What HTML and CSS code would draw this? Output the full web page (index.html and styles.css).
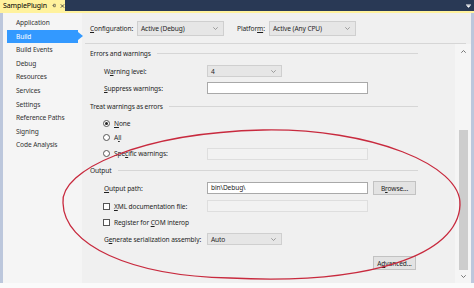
FILE: index.html
```html
<!DOCTYPE html>
<html lang="en">
<head>
<meta charset="UTF-8" />
<title>SamplePlugin - Build</title>
<link rel="stylesheet" href="styles.css">
</head>
<body>
<div class="window">
  <div class="tabbar">
    <div class="tab">
      <span class="tab-title">SamplePlugin</span>
      <svg class="tab-pin" width="5" height="5" viewBox="0 0 5 5"><path d="M0.5 2.5h1.5M2 1v3h2V1z" fill="none" stroke="#444" stroke-width="0.8"/></svg>
      <svg class="tab-close" width="6" height="6" viewBox="0 0 6 6"><path d="M1 1l4 4M5 1l-4 4" stroke="#333" stroke-width="1"/></svg>
    </div>
    <svg class="tab-menu" width="5" height="4" viewBox="0 0 5 4"><path d="M0 0.5h5M0.5 1.5h4L2.5 3.5z" fill="#fff" stroke="#fff" stroke-width="0.5"/></svg>
  </div>

  <div class="workspace">
    <ul class="nav">
      <li>Application</li>
      <li class="active">Build</li>
      <li>Build Events</li>
      <li>Debug</li>
      <li>Resources</li>
      <li>Services</li>
      <li>Settings</li>
      <li>Reference Paths</li>
      <li>Signing</li>
      <li>Code Analysis</li>
    </ul>

    <div class="main">
      <div class="config-bar">
        <span class="config-label"><u>C</u>onfiguration:</span>
        <div class="select config-select"><span>Active (Debug)</span><svg class="chev" width="5" height="3" viewBox="0 0 5 3"><path d="M0.3 0.3l2.2 2.2 2.2-2.2" fill="none" stroke="#888" stroke-width="0.8"/></svg></div>
        <span class="platform-label">Platfor<u>m</u>:</span>
        <div class="select config-select"><span>Active (Any CPU)</span><svg class="chev" width="5" height="3" viewBox="0 0 5 3"><path d="M0.3 0.3l2.2 2.2 2.2-2.2" fill="none" stroke="#888" stroke-width="0.8"/></svg></div>
      </div>
      <div class="config-rule"></div>

      <div class="scroll-area">
        <div class="form">
          <div class="section r1"><span>Errors and warnings</span></div>

          <span class="label r2"><span>W<u>a</u>rning level:</span></span>
          <div class="select field-select r2"><span>4</span><svg class="chev" width="5" height="3" viewBox="0 0 5 3"><path d="M0.3 0.3l2.2 2.2 2.2-2.2" fill="none" stroke="#888" stroke-width="0.8"/></svg></div>

          <span class="label r3"><span><u>S</u>uppress warnings:</span></span>
          <div class="input r3"></div>

          <div class="section r4"><span>Treat warnings as errors</span></div>

          <label class="option r5"><span class="radio checked"></span><span><u>N</u>one</span></label>
          <label class="option r6"><span class="radio"></span><span>A<u>l</u>l</span></label>
          <label class="option r7"><span class="radio"></span><span>Spe<u>c</u>ific warnings:</span></label>
          <div class="input disabled r7"></div>

          <div class="section r8"><span>Output</span></div>

          <span class="label r9"><span><u>O</u>utput path:</span></span>
          <div class="input r9">bin\Debug\</div>
          <button class="btn r9">B<u>r</u>owse...</button>

          <label class="option r10"><span class="check"></span><span><u>X</u>ML documentation file:</span></label>
          <div class="input disabled r10"></div>

          <label class="option r11"><span class="check"></span><span>Register for <u>C</u>OM interop</span></label>

          <span class="label r12"><span>G<u>e</u>nerate serialization assembly:</span></span>
          <div class="select field-select r12"><span>Auto</span><svg class="chev" width="5" height="3" viewBox="0 0 5 3"><path d="M0.3 0.3l2.2 2.2 2.2-2.2" fill="none" stroke="#888" stroke-width="0.8"/></svg></div>

          <button class="btn r13">A<u>d</u>vanced...</button>
        </div>

        <div class="scrollbar">
          <svg class="arrow" width="5" height="3" viewBox="0 0 5 3"><path d="M0.3 2.7l2.2-2.2 2.2 2.2" fill="none" stroke="#666" stroke-width="0.9"/></svg>
          <div class="track"><div class="thumb"></div></div>
          <svg class="arrow" width="5" height="3" viewBox="0 0 5 3"><path d="M0.3 0.3l2.2 2.2 2.2-2.2" fill="none" stroke="#666" stroke-width="0.9"/></svg>
        </div>
      </div>
    </div>
  </div>
</div>

<svg class="annotation" width="474" height="288" viewBox="0 0 474 288">
  <path d="M63 203 C60 170 140 133 263 130 C370 128 462 165 460 205 C458 255 370 285 230 278 C130 276 64 245 63 203 Z" fill="none" stroke="#c82a3e" stroke-width="1.3"/>
</svg>
</body>
</html>
```

FILE: styles.css
```css
/* Base */
* {
  margin: 0;
  padding: 0;
  box-sizing: border-box;
}

body {
  width: 474px;
  height: 288px;
  overflow: hidden;
  background: #fafafa;
  font-family: 'Noto Sans', 'Open Sans', sans-serif;
  font-size: 6.6px;
  letter-spacing: -0.1px;
  color: #1e1e1e;
  position: relative;
}

u {
  text-decoration: underline;
  text-underline-offset: 1px;
}

.window {
  display: flex;
  flex-direction: column;
  height: 283px;
  border-left: 3px solid #bcc7dc;
  border-right: 3px solid #bcc7dc;
  background: #f0f0f0;
}

/* Document tab strip */
.tabbar {
  height: 13px;
  display: flex;
  align-items: flex-start;
  background: #293955;
  border-bottom: 2px solid #fff29d;
  margin-left: -3px;
  margin-right: -3px;
}

.tab {
  height: 11px;
  width: 65px;
  display: flex;
  align-items: center;
  gap: 4px;
  padding-left: 3px;
  background: #fff29d;
}

.tab-title {
  font-size: 7px;
  color: #000;
}

.tab-pin {
  margin-left: 1px;
}

.tab-menu {
  margin-left: auto;
  margin-right: 3px;
  margin-top: 4px;
}

.workspace {
  flex: 1;
  display: flex;
}

/* Left property page list */
.nav {
  list-style: none;
  width: 79px;
  padding-top: 3px;
  background: #f5f5f5;
}

.nav li {
  position: relative;
  height: 13.6px;
  line-height: 13.6px;
  padding-left: 9px;
  margin-left: 4px;
  margin-right: 4px;
  color: #333;
}

.nav li.active {
  background: #3399ff;
  color: #fff;
}

.nav li.active::after {
  content: "";
  position: absolute;
  right: -5px;
  top: 2.3px;
  border-left: 5px solid #3399ff;
  border-top: 4.5px solid transparent;
  border-bottom: 4.5px solid transparent;
}

/* Main pane */
.main {
  flex: 1;
  display: flex;
  flex-direction: column;
}

.config-bar {
  display: flex;
  align-items: center;
  height: 15px;
  margin-top: 8px;
  padding-left: 8px;
  white-space: nowrap;
}

.config-label {
  width: 47px;
}

.platform-label {
  margin-left: 13px;
  width: 32px;
}

.select {
  display: flex;
  align-items: center;
  padding-left: 3px;
  padding-right: 5px;
  background: #e6e6e6;
  border: 1px solid #cfcfcf;
}

.select .chev {
  margin-left: auto;
}

.config-select {
  width: 87px;
  height: 15px;
}

.config-rule {
  height: 1px;
  margin: 7px 5px 0 3px;
  background: #d6d6d6;
}

.scroll-area {
  flex: 1;
  display: flex;
}

.form {
  flex: 1;
  display: grid;
  grid-template-columns: 14px 103px 161px 50px;
  grid-template-rows: 18px 17px 18px 17px 14px 16.5px 16.5px 18px 18px 16px 17px 24px 14px;
  align-content: start;
  padding-top: 2px;
  padding-left: 8px;
  white-space: nowrap;
}

.form > * {
  height: 14px;
  align-self: start;
}

.r1 { grid-row: 1; }
.r2 { grid-row: 2; }
.r3 { grid-row: 3; }
.r4 { grid-row: 4; }
.r5 { grid-row: 5; }
.r6 { grid-row: 6; }
.r7 { grid-row: 7; }
.r8 { grid-row: 8; }
.r9 { grid-row: 9; }
.r10 { grid-row: 10; }
.r11 { grid-row: 11; }
.r12 { grid-row: 12; }
.r13 { grid-row: 13; }

.section {
  grid-column: 1 / -1;
  display: flex;
  align-items: center;
  gap: 6px;
}

.section::after {
  content: "";
  flex: 1;
  height: 1px;
  background: #d6d6d6;
}

.label,
.option {
  grid-column: 2;
  display: flex;
  align-items: center;
}

.option {
  gap: 4px;
  margin-left: -1px;
}

.option.r11 {
  grid-column: 2 / span 2;
}

.field-select {
  grid-column: 3;
  width: 75px;
  height: 12px;
  margin-top: 1px;
}

.input {
  grid-column: 3;
  height: 12px;
  margin-top: 1px;
  padding-left: 3px;
  line-height: 10px;
  background: #fff;
  border: 1px solid #a9a9a9;
}

.input.disabled {
  background: #f2f2f2;
  border-color: #dedede;
}

.btn {
  grid-column: 4;
  width: 43px;
  margin-left: 5px;
  font: inherit;
  letter-spacing: inherit;
  color: #1e1e1e;
  background: #e3e3e3;
  border: 1px solid #c2c2c2;
}

.radio,
.check {
  width: 7px;
  height: 7px;
  border: 1px solid #555;
  background: #fff;
  flex: none;
}

.radio {
  border-radius: 50%;
  position: relative;
}

.radio.checked::after {
  content: "";
  position: absolute;
  left: 1px;
  top: 1px;
  width: 3px;
  height: 3px;
  border-radius: 50%;
  background: #222;
}

/* Scrollbar */
.scrollbar {
  width: 16px;
  display: flex;
  flex-direction: column;
  align-items: center;
  padding-top: 6px;
  background: #f5f5f5;
}

.arrow {
  flex: none;
}

.track {
  flex: 1;
  width: 100%;
  display: flex;
  justify-content: center;
}

.thumb {
  width: 9px;
  height: 140px;
  margin-top: 77px;
  background: #cdcdcd;
}

.scrollbar .arrow:last-child {
  margin-bottom: 5px;
}

/* Red hand-drawn annotation over the form */
.annotation {
  position: absolute;
  left: 0;
  top: 0;
  pointer-events: none;
}
```
